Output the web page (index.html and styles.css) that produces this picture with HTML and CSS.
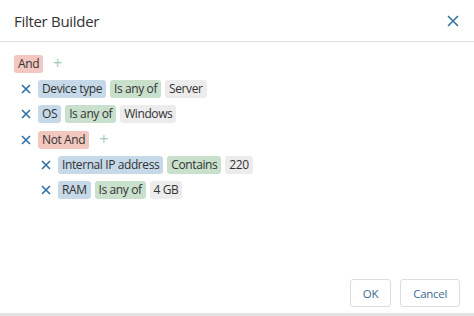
FILE: index.html
```html
<!DOCTYPE html>
<html lang="en">
<head>
    <meta charset="UTF-8">
    <title>Filter Builder</title>
    <link rel="stylesheet" href="styles.css">
</head>
<body>
    <div class="dialog">
        <div class="dialog-header">
            <span class="dialog-title">Filter Builder</span>
            <button class="close-btn" aria-label="Close">
                <svg width="12" height="12" viewBox="0 0 12 12"><path d="M1 1L11 11M11 1L1 11" stroke="currentColor" stroke-width="1.5"/></svg>
            </button>
        </div>
        <div class="dialog-body">
            <div class="row">
                <span class="chip group">And</span>
                <span class="add">+</span>
            </div>
            <div class="row level-1">
                <span class="remove"><svg width="10" height="10" viewBox="0 0 10 10"><path d="M1 1L9 9M9 1L1 9" stroke="currentColor" stroke-width="1.6"/></svg></span>
                <span class="chip field">Device type</span>
                <span class="chip op">Is any of</span>
                <span class="chip value">Server</span>
            </div>
            <div class="row level-1">
                <span class="remove"><svg width="10" height="10" viewBox="0 0 10 10"><path d="M1 1L9 9M9 1L1 9" stroke="currentColor" stroke-width="1.6"/></svg></span>
                <span class="chip field">OS</span>
                <span class="chip op">Is any of</span>
                <span class="chip value">Windows</span>
            </div>
            <div class="row level-1">
                <span class="remove"><svg width="10" height="10" viewBox="0 0 10 10"><path d="M1 1L9 9M9 1L1 9" stroke="currentColor" stroke-width="1.6"/></svg></span>
                <span class="chip group">Not And</span>
                <span class="add">+</span>
            </div>
            <div class="row level-2">
                <span class="remove"><svg width="10" height="10" viewBox="0 0 10 10"><path d="M1 1L9 9M9 1L1 9" stroke="currentColor" stroke-width="1.6"/></svg></span>
                <span class="chip field">Internal IP address</span>
                <span class="chip op">Contains</span>
                <span class="chip value">220</span>
            </div>
            <div class="row level-2">
                <span class="remove"><svg width="10" height="10" viewBox="0 0 10 10"><path d="M1 1L9 9M9 1L1 9" stroke="currentColor" stroke-width="1.6"/></svg></span>
                <span class="chip field">RAM</span>
                <span class="chip op">Is any of</span>
                <span class="chip value">4 GB</span>
            </div>
        </div>
        <div class="dialog-footer">
            <button class="btn">OK</button>
            <button class="btn">Cancel</button>
        </div>
    </div>
</body>
</html>
```
FILE: styles.css
```css
body {
    margin: 0;
    font-family: "Open Sans", Arial, sans-serif;
    background: #e2e2e2;
    color: #333;
}
.dialog {
    width: 474px;
    height: 313px;
    background: #fff;
    display: flex;
    flex-direction: column;
    box-sizing: border-box;
}
.dialog-header {
    height: 42px;
    border-bottom: 1px solid #ddd;
    display: flex;
    align-items: center;
    justify-content: space-between;
    padding: 0 14px;
    box-sizing: border-box;
}
.dialog-title {
    font-size: 15px;
    letter-spacing: -0.3px;
    color: #333;
}
.close-btn {
    border: none;
    background: none;
    padding: 0;
    color: #2f6f9f;
    display: flex;
    margin-right: 1px;
}
.dialog-body {
    flex: 1;
    padding: 13px 14px 0;
}
.row {
    height: 25.2px;
    display: flex;
    align-items: flex-start;
    gap: 4px;
}
.row.level-2 {
    padding-left: 20px;
}
.remove {
    width: 16px;
    height: 18px;
    display: flex;
    align-items: center;
    justify-content: center;
    color: #2f6fa5;
    margin-left: 4px;
}
.chip {
    height: 18px;
    line-height: 18px;
    padding: 0 4px;
    font-size: 12px;
    letter-spacing: -0.4px;
    border-radius: 3px;
    white-space: nowrap;
}
.chip.group { background: #f2c7c0; }
.chip.field { background: #c6d9e8; }
.chip.op { background: #c9e0cd; }
.chip.value { background: #ececec; }
.add {
    height: 18px;
    line-height: 17px;
    font-size: 16px;
    color: #a3cbb3;
    margin-left: 6px;
}
.dialog-footer {
    display: flex;
    justify-content: flex-end;
    gap: 9px;
    padding: 0 14px 6px;
}
.btn {
    height: 28px;
    padding: 0 12px;
    font-family: "Open Sans", Arial, sans-serif;
    font-size: 11.5px;
    letter-spacing: -0.3px;
    color: #3c6a92;
    background: #fff;
    border: 1px solid #ddd;
    border-radius: 3px;
}
```
